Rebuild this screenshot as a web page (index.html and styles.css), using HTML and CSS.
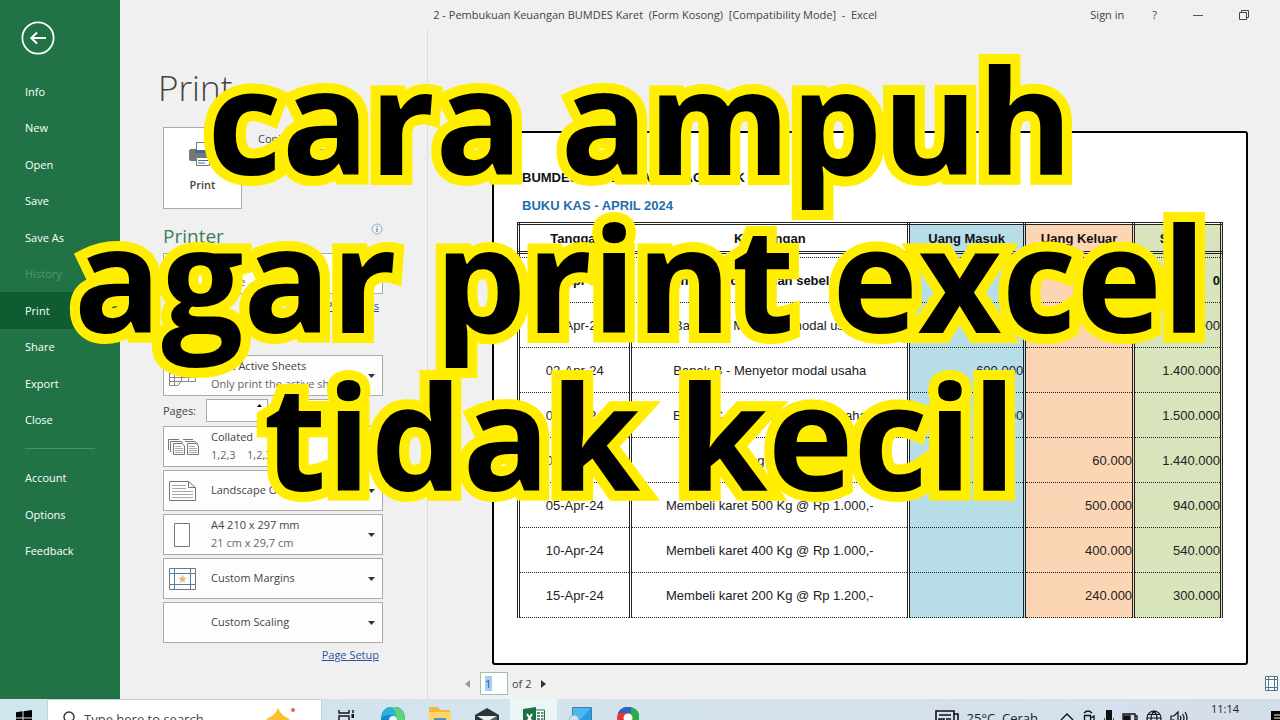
FILE: index.html
```html
<!DOCTYPE html>
<html lang="id">
<head>
  <meta charset="UTF-8">
  <meta name="viewport" content="width=device-width, initial-scale=1.0">
  <title>cara ampuh agar print excel tidak kecil</title>
  <link rel="stylesheet" href="styles.css">
</head>
<body>

  <div class="backstage">
    <!-- Menu File -->
    <nav class="sidebar">
      <button class="back" aria-label="Back">
        <svg width="34" height="34" viewBox="0 0 34 34" fill="none" stroke="#fff">
          <circle cx="17" cy="17" r="15.6" stroke-width="1.8"/>
          <path d="M25 17H10M16 11.5L10.300 17L16 22.500" stroke-width="2"/>
        </svg>
      </button>
      <ul class="menu menu-main">
        <li><a href="#">Info</a></li>
        <li><a href="#">New</a></li>
        <li><a href="#">Open</a></li>
        <li><a href="#">Save</a></li>
        <li><a href="#">Save As</a></li>
        <li class="disabled"><a>History</a></li>
        <li class="active"><a href="#">Print</a></li>
        <li><a href="#">Share</a></li>
        <li><a href="#">Export</a></li>
        <li><a href="#">Close</a></li>
      </ul>
      <hr class="menu-line">
      <ul class="menu menu-more">
        <li><a href="#">Account</a></li>
        <li><a href="#">Options</a></li>
        <li><a href="#">Feedback</a></li>
      </ul>
    </nav>

    <div class="main">
      <header class="titlebar">
        <span class="doc-title">2 - Pembukuan Keuangan BUMDES Karet  (Form Kosong)  [Compatibility Mode]  -  Excel</span>
        <div class="window-tools">
          <button>Sign in</button>
          <button aria-label="Help">?</button>
          <button aria-label="Minimize">
            <svg width="10" height="10" viewBox="0 0 10 10" stroke="#555"><path d="M0 5.500H10"/></svg>
          </button>
          <button aria-label="Restore">
            <svg width="10" height="10" viewBox="0 0 10 10" fill="none" stroke="#444"><path d="M.5 2.500H7.500V9.500H.5ZM2.500 2.500V.5H9.500V7.500H7.500"/></svg>
          </button>
        </div>
      </header>

      <div class="content">
        <!-- Pengaturan cetak -->
        <section class="settings">
          <h1>Print</h1>
          <div class="print-row">
            <button class="print-button">
              <svg width="28" height="26" viewBox="0 0 28 26">
                <rect x="0" y="8" width="28" height="12" rx="2" fill="#777"/>
                <path d="M7.500 1.500H20.500V12H7.500Z" fill="#fff" stroke="#777"/>
                <path d="M6 9H22V12H6Z" fill="#3b6ea8"/>
                <path d="M7.500 16.500H20.500V24.500H7.500Z" fill="#fff" stroke="#777"/>
                <path d="M9 19.500H19M9 22H16" stroke="#3b6ea8"/>
              </svg>
              Print
            </button>
            <label for="copies">Copies:</label>
            <input type="text" id="copies" value="1">
          </div>

          <div class="section-head">
            <h2>Printer</h2>
            <svg width="12" height="12" viewBox="0 0 12 12" fill="none"><circle cx="6" cy="6" r="5" stroke="#8fb0cc"/><path d="M6 3V4M6 5V9" stroke="#2f6ea5"/></svg>
          </div>
          <div class="picker">
            <svg class="picker-icon" width="28" height="22" viewBox="0 0 28 22"><path d="M6.500 1.500H21.500V8H6.500Z" fill="#fff" stroke="#777"/><rect x="2" y="8" width="24" height="9" fill="#777"/></svg>
            <div class="picker-text">
              <select aria-label="Printer"><option>Canon G2010</option></select>
              <small>Offline</small>
            </div>
            <svg class="arrow" width="7" height="4" viewBox="0 0 7 4"><path d="M0 0H7L3.500 4Z"/></svg>
          </div>
          <a class="link" href="#">Printer Properties</a>

          <h2 class="settings-head">Settings</h2>
          <div class="picker">
            <svg class="picker-icon" width="28" height="22" viewBox="0 0 28 22" fill="none" stroke="#888"><path d="M1.500 4.500H27.500V16.500H13L10 20.500H1.500ZM1.500 8.500H27.500M1.500 12.500H27.500M1.500 16.500H13M6.500 4.500V20.500M13.500 4.500V16.500M20.500 4.500V16.500"/></svg>
            <div class="picker-text">
              <select aria-label="Print what"><option>Print Active Sheets</option></select>
              <small>Only print the active sheets</small>
            </div>
            <svg class="arrow" width="7" height="4" viewBox="0 0 7 4"><path d="M0 0H7L3.500 4Z"/></svg>
          </div>
          <div class="pages-row">
            <label for="pageFrom">Pages:</label>
            <div class="spin">
              <input type="text" id="pageFrom">
              <svg width="5" height="3" viewBox="0 0 5 3"><path d="M0 3H5L2.500 0Z"/></svg>
            </div>
            <label for="pageTo">to</label>
            <div class="spin">
              <input type="text" id="pageTo">
              <svg width="5" height="3" viewBox="0 0 5 3"><path d="M0 3H5L2.500 0Z"/></svg>
            </div>
          </div>
          <div class="picker-list">
            <div class="picker">
              <svg class="picker-icon wide" width="32" height="18" viewBox="0 0 32 18" fill="none" stroke="#777">
                <path d="M.5 12V1.500H11M2.500 14V3.500H13L15 5M15 1.500H25M17 3.500H27L30 6"/>
                <path d="M5.500 5.500H14L16.500 8V16.500H5.500ZM19.500 5.500H28L30.500 8V16.500H19.500Z" fill="#fff"/>
                <path d="M7 8.500H13M7 10.500H15M7 12.500H15M7 14.500H15M21 8.500H27M21 10.500H29M21 12.500H29M21 14.500H29" stroke="#aaa"/>
              </svg>
              <div class="picker-text">
                <select aria-label="Collation"><option>Collated</option></select>
                <small>1,2,3    1,2,3    1,2,3</small>
              </div>
              <svg class="arrow" width="7" height="4" viewBox="0 0 7 4"><path d="M0 0H7L3.500 4Z"/></svg>
            </div>
            <div class="picker">
              <svg class="picker-icon" width="28" height="22" viewBox="0 0 28 22" fill="#fff" stroke="#777"><path d="M1.500 1.500H20.500L27.500 7.500V20.500H1.500ZM20.500 1.500V7.500H27.500"/><path d="M4 5.500H18M4 8.500H18M4 11.500H25M4 14.500H25M4 17.500H25" stroke="#aaa"/></svg>
              <div class="picker-text">
                <select aria-label="Orientation"><option>Landscape Orientation</option></select>
              </div>
              <svg class="arrow" width="7" height="4" viewBox="0 0 7 4"><path d="M0 0H7L3.500 4Z"/></svg>
            </div>
            <div class="picker">
              <svg class="picker-icon" width="28" height="24" viewBox="0 0 28 24" fill="#fff" stroke="#777"><path d="M6.500 .5H21.500V23.500H6.500Z"/></svg>
              <div class="picker-text">
                <select aria-label="Paper size"><option>A4 210 x 297 mm</option></select>
                <small>21 cm x 29,7 cm</small>
              </div>
              <svg class="arrow" width="7" height="4" viewBox="0 0 7 4"><path d="M0 0H7L3.500 4Z"/></svg>
            </div>
            <div class="picker">
              <svg class="picker-icon" width="28" height="22" viewBox="0 0 28 22" fill="none" stroke="#777">
                <path d="M1.500 .5H27.500V21.500H1.500Z"/>
                <path d="M6.500 .5V21.500M22.500 .5V21.500M1.500 5.500H27.500M1.500 16.500H27.500" stroke="#4f7fae"/>
                <path d="M14.500 6.500L15.700 9.700H19L16.300 11.700L17.300 15L14.500 13L11.700 15L12.700 11.700L10 9.700H13.300Z" fill="#ecb877" stroke="none"/>
              </svg>
              <div class="picker-text">
                <select aria-label="Margins"><option>Custom Margins</option></select>
              </div>
              <svg class="arrow" width="7" height="4" viewBox="0 0 7 4"><path d="M0 0H7L3.500 4Z"/></svg>
            </div>
            <div class="picker">
              <span class="picker-icon"></span>
              <div class="picker-text">
                <select aria-label="Scaling"><option>Custom Scaling</option></select>
              </div>
              <svg class="arrow" width="7" height="4" viewBox="0 0 7 4"><path d="M0 0H7L3.500 4Z"/></svg>
            </div>
          </div>
          <a class="link page-setup" href="#">Page Setup</a>
        </section>

        <!-- Pratinjau halaman -->
        <section class="preview">
          <div class="paper">
            <p class="org">BUMDES SUMBER AMAN AGUNG K</p>
            <p class="book">BUKU KAS - APRIL 2024</p>
            <table class="cash">
              <colgroup>
                <col class="c-date"><col class="c-note"><col class="c-in"><col class="c-out"><col class="c-total">
              </colgroup>
              <thead>
                <tr><th>Tanggal</th><th>Keterangan</th><th>Uang Masuk</th><th>Uang Keluar</th><th>Saldo</th></tr>
              </thead>
              <tbody>
                <tr class="thin"><td></td><td></td><td></td><td></td><td></td></tr>
                <tr class="opening"><td>01-Apr-24</td><td>Pindahan dari bulan sebelumnya</td><td></td><td></td><td>0</td></tr>
                <tr><td>01-Apr-24</td><td>Bapak A - Menyetor modal usaha</td><td>800.000</td><td></td><td>800.000</td></tr>
                <tr><td>02-Apr-24</td><td>Bapak B - Menyetor modal usaha</td><td>600.000</td><td></td><td>1.400.000</td></tr>
                <tr><td>03-Apr-24</td><td>Bapak C - Menyetor modal usaha</td><td>100.000</td><td></td><td>1.500.000</td></tr>
                <tr><td>04-Apr-24</td><td>Uang bensin</td><td></td><td>60.000</td><td>1.440.000</td></tr>
                <tr><td>05-Apr-24</td><td>Membeli karet 500 Kg @ Rp 1.000,-</td><td></td><td>500.000</td><td>940.000</td></tr>
                <tr><td>10-Apr-24</td><td>Membeli karet 400 Kg @ Rp 1.000,-</td><td></td><td>400.000</td><td>540.000</td></tr>
                <tr><td>15-Apr-24</td><td>Membeli karet 200 Kg @ Rp 1.200,-</td><td></td><td>240.000</td><td>300.000</td></tr>
              </tbody>
            </table>
          </div>
          <div class="pager">
            <button aria-label="Previous page"><svg width="5" height="8" viewBox="0 0 5 8" fill="#999"><path d="M5 0V8L0 4Z"/></svg></button>
            <div class="page-box"><input type="text" id="page" value="1" aria-label="Current page"></div>
            <label for="page">of 2</label>
            <button aria-label="Next page"><svg width="5" height="8" viewBox="0 0 5 8" fill="#333"><path d="M0 0V8L5 4Z"/></svg></button>
            <button class="show-margins" aria-label="Show Margins"><svg width="13" height="15" viewBox="0 0 13 15" fill="#fff" stroke="#4f7690"><path d="M.5 .5H12.500V14.500H.5ZM3.500 .5V14.500M9.500 .5V14.500M.5 3.500H12.500M.5 11.500H12.500"/></svg></button>
          </div>
        </section>
      </div>
    </div>
  </div>

  <footer class="taskbar">
    <button class="start" aria-label="Start">
      <svg width="16" height="16" viewBox="0 0 16 16"><path d="M0 2.300L6.500 1.300V7.500H0ZM7.500 1.200L16 0V7.500H7.500ZM0 8.500H6.500V14.700L0 13.700ZM7.500 8.500H16V16L7.500 14.800Z"/></svg>
    </button>
    <div class="search">
      <svg width="14" height="18" viewBox="0 0 14 18" fill="none" stroke="#333" stroke-width="1.400"><circle cx="8" cy="6" r="5"/><path d="M5 10L1 16"/></svg>
      <input type="text" placeholder="Type here to search" aria-label="Search">
      <svg width="42" height="30" viewBox="0 0 42 30"><path d="M12 0Q15 8 24 11Q16 15 12 25Q8 15 0 11Q9 8 12 0Z" fill="#fbc02d"/><path d="M33 10Q34 16 40 18Q34 20 33 26Q31 20 26 18Q32 16 33 10Z" fill="#fdd663"/><circle cx="27" cy="2" r="2" fill="#e8663c"/></svg>
    </div>
    <div class="apps">
      <button aria-label="Task View">
        <svg width="16" height="18" viewBox="0 0 16 18" fill="none" stroke="#111" stroke-width="1.400"><path d="M1 0V3H11V0M1 6H11V14H1ZM15 0V3M15 10V17"/><path d="M13.500 4H16.500V8H13.500Z" fill="#111" stroke="none"/></svg>
      </button>
      <button aria-label="Edge">
        <svg width="24" height="24" viewBox="0 0 24 24"><circle cx="12" cy="12" r="12" fill="#1681d0"/><path d="M0 11A12 12 0 0 1 24 11C24 17 16 18 15 14C16 9 8 5 0 11Z" fill="#2bb3cf"/><path d="M10 0A12 12 0 0 1 24 11C24 16 17 17 15 14C17 8 14 3 10 0Z" fill="#5fd477"/><circle cx="12" cy="13" r="4" fill="#e6f6fa"/></svg>
      </button>
      <button aria-label="File Explorer">
        <svg width="22" height="20" viewBox="0 0 22 20"><path d="M0 0H9L11 3H21V20H0Z" fill="#f4b63c"/><path d="M0 5H22V20H0Z" fill="#fdd667"/><path d="M5 11H17V20H5Z" fill="#4a91c4"/></svg>
      </button>
      <button aria-label="Mail">
        <svg width="24" height="24" viewBox="0 0 24 24"><path d="M0 8L12 1L24 8V24H0Z" fill="#2d353c"/><path d="M2 9H22L12 15Z" fill="#e9f1f5"/><path d="M12 15L22 9V18Z" fill="#55616a"/></svg>
      </button>
      <button class="open" aria-label="Excel">
        <svg width="22" height="22" viewBox="0 0 22 22"><path d="M10 3H21.500V20H10Z" fill="#fff" stroke="#1f7244"/><path d="M14 6H17M14 9H17M14 12H17M18 6H20.500M18 9H20.500M18 12H20.500" stroke="#1f7244" stroke-width="1.600"/><path d="M0 2L13 0V22L0 20Z" fill="#1f7244"/><path d="M4 7L9 15M9 7L4 15" stroke="#fff" stroke-width="2"/></svg>
      </button>
      <button aria-label="Remote Desktop">
        <svg width="24" height="22" viewBox="0 0 24 22"><path d="M3.500 .5H22.500V16H3.500Z" fill="#4db8ef" stroke="#3a7cab"/><path d="M8 16L22 1V16Z" fill="#2a9be0"/><circle cx="5" cy="13" r="5" fill="#cfe3ef" stroke="#8aa9bd"/></svg>
      </button>
      <button aria-label="Recorder">
        <svg width="22" height="22" viewBox="0 0 22 22"><circle cx="11" cy="11" r="11" fill="#e4392e"/><path d="M1 6A11 11 0 0 1 14 0L15 6H8Z" fill="#2f62c9"/><path d="M14 0A11 11 0 0 1 20 18L14 13Z" fill="#2bab4a"/><circle cx="11" cy="11" r="4.500" fill="#fff"/></svg>
      </button>
    </div>
    <div class="weather">
      <svg width="24" height="18" viewBox="0 0 24 18" fill="none" stroke="#111" stroke-width="1.600"><path d="M1 1H19V17H1ZM19 4H23V17H19M4 5H16M4 9H9V13H4ZM11 9H16M11 12H16"/></svg>
      <span>25°C  Cerah</span>
    </div>
    <div class="tray">
      <svg width="14" height="16" viewBox="0 0 14 16" fill="none" stroke="#111" stroke-width="1.400"><path d="M1 10L7 4L13 10"/></svg>
      <svg width="14" height="16" viewBox="0 0 14 16" fill="none" stroke="#111" stroke-width="1.300"><path d="M2 3Q6 -1 10 3M2.500 5.500H8.500V14H2.500ZM8.500 8L12 6V13L8.500 11"/></svg>
      <svg width="10" height="18" viewBox="0 0 10 18"><rect x="2" y="0" width="6" height="11" fill="#111"/><path d="M0 8V13H10V8" fill="none" stroke="#111" stroke-width="1.400"/></svg>
      <svg width="16" height="14" viewBox="0 0 16 14" fill="none" stroke="#111" stroke-width="1.300"><path d="M1 4H13V12H1ZM13 6H15V10H13"/><path d="M2 6H8V11H2Z" fill="#111"/></svg>
      <svg width="16" height="16" viewBox="0 0 16 16" fill="none" stroke="#111" stroke-width="1.200"><circle cx="8" cy="8" r="7"/><path d="M1 8H15M2 4.500H14M8 1C4 5 4 11 8 15M8 1C12 5 12 11 8 15"/></svg>
      <svg width="18" height="16" viewBox="0 0 18 16" fill="none" stroke="#111" stroke-width="1.200"><path d="M1 6H4L8 2V14L4 10H1ZM10 6Q12 8 10 10M12.500 4Q15.500 8 12.500 12M15 2Q19 8 15 14"/></svg>
    </div>
    <time class="clock">11:14</time>
    <button class="notes" aria-label="Notifications">
      <svg width="18" height="18" viewBox="0 0 18 18"><path d="M0 0H18V14H10L6 18V14H0Z"/><path d="M3 4H15M3 7H15M3 10H15" stroke="#fff"/></svg>
    </button>
  </footer>

  <p class="headline">cara ampuh<br>agar print excel<br>tidak kecil</p>

</body>
</html>
```

FILE: styles.css
```css
* { box-sizing: border-box; }
body {
  margin: 0; height: 100vh; overflow: hidden; position: relative;
  font-family: "Open Sans", "Noto Sans", sans-serif; font-size: 11px; line-height: 16px;
  color: #444; background: #f0f0f0;
}
h1, h2, p, ul { margin: 0; padding: 0; }
button, input, select { font: inherit; color: inherit; }
button {
  display: flex; align-items: center; justify-content: center;
  padding: 0; border: none; background: none;
}
svg { display: block; flex-shrink: 0; }

.backstage { display: flex; height: calc(100vh - 21px); }

/* Menu kiri */
.sidebar { width: 120px; flex-shrink: 0; padding-top: 21px; background: #217346; color: #fff; }
.back { margin-left: 21px; }
.menu { list-style: none; display: flex; flex-direction: column; }
.menu li { flex: 1; display: flex; align-items: center; padding: 1px 0 0 25px; }
.menu a { color: inherit; text-decoration: none; }
.menu-main { height: 365px; margin-top: 18px; }
.menu-more { height: 110px; }
.menu .active { background: #0e5c2f; }
.menu .disabled { color: #4f9670; }
.menu-line { margin: 10px 25px; border: none; border-top: 1px solid #439467; }

.main { flex: 1; min-width: 0; display: flex; flex-direction: column; }
.titlebar { display: flex; align-items: center; height: 30px; padding-right: 31px; }
.doc-title { flex: 1; padding-left: 100px; text-align: center; white-space: pre; }
.window-tools { display: flex; justify-content: flex-end; gap: 28px; }
.window-tools button:nth-child(n+3) { margin-left: 8px; }
.content { flex: 1; display: flex; min-height: 0; }

/* Kolom pengaturan */
.settings { width: 308px; flex-shrink: 0; padding: 32px 44px 0 43px; border-right: 1px solid #dcdcdc; }
.settings h1 { margin-left: -5px; font-size: 35px; line-height: 52px; font-weight: 300; }
.settings h2 { font-size: 19px; line-height: 24px; font-weight: 400; color: #3b7f5b; }
.print-row { display: flex; align-items: flex-start; margin-top: 13px; }
.print-button {
  flex-direction: column; gap: 10px; width: 79px; height: 82px; padding-bottom: 2px;
  border: 1px solid #ababab; background: #fff; font-weight: 600;
}
.print-row label { margin: 4px 14px 0 16px; }
.print-row input { width: 56px; height: 23px; padding: 0 4px; border: 1px solid #ababab; background: #fff; }
.section-head { display: flex; align-items: flex-start; justify-content: space-between; height: 32px; margin-top: 12px; }
.section-head svg { margin-top: 2px; }
.section-head h2 { margin-top: 3px; }
.picker {
  display: flex; align-items: center; height: 41px; padding: 0 7px 0 4px;
  border: 1px solid #ababab; background: #fdfdfd;
}
.picker-icon { width: 28px; margin-right: 15px; }
.picker-icon.wide { width: 32px; margin-right: 11px; }
.picker-text { flex: 1; min-width: 0; padding-bottom: 2px; }
.picker select {
  display: block; width: 100%; height: 19px; padding: 0; border: none;
  appearance: none; background: none; font-weight: 500;
}
.picker small { display: block; font-size: 11px; line-height: 18px; white-space: pre; overflow: hidden; color: #666; }
.arrow { fill: #333; }
.link { display: block; margin: 4px 4px 0 0; text-align: right; color: #2b579a; }
.settings-head { margin: 13px 0 4px; }
.pages-row { display: flex; align-items: center; gap: 10px; height: 23px; margin: 3px 0 4px; }
.spin { display: flex; align-items: flex-start; width: 62px; height: 23px; padding: 4px 5px; border: 1px solid #ababab; background: #fff; }
.spin input { flex: 1; min-width: 0; padding: 0; border: none; height: 14px; background: none; }
.picker-list { display: flex; flex-direction: column; gap: 3px; }

/* Pratinjau */
.preview { flex: 1; min-width: 0; display: flex; flex-direction: column; padding-top: 101px; }
.paper {
  height: 534px; margin: 0 32px 0 64px; padding: 33px 23px 0; background: #fff;
  border: 2px solid #000; border-radius: 3px;
  font-family: "Liberation Sans Narrow", "Liberation Sans", sans-serif; font-size: 13px; line-height: 24px; color: #222;
}
.org, .book { padding-left: 5px; font-weight: bold; color: #111; white-space: pre; }
.book { margin: 4px 0; color: #1f6fae; }
.cash { width: 100%; table-layout: fixed; border-collapse: collapse; }
.cash th, .cash td { padding: 2px 0 0; border: 3px double #222; text-align: center; }
.cash th { height: 29px; color: #111; }
.cash td { height: 45px; border-top: 1px dotted #222; border-bottom: 1px dotted #222; }
.cash .thin td { height: 5px; }
.cash td:nth-child(n+3) { text-align: right; }
.cash th:nth-child(3), .cash td:nth-child(3) { background: #b7dde8; }
.cash th:nth-child(4), .cash td:nth-child(4) { background: #fcd5b4; }
.cash th:nth-child(5), .cash td:nth-child(5) { background: #d8e4bc; }
.cash .opening { font-weight: bold; color: #111; }
.cash tbody tr:first-child td { border-top: 3px double #222; }
.c-date { width: 16%; }
.c-note { width: 39.5%; }
.c-in { width: 16.5%; }
.c-out { width: 15.5%; }
.c-total { width: 12.5%; }
.pager { display: flex; align-items: center; height: 23px; margin-top: 7px; padding: 0 2px 0 37px; }
.page-box { display: flex; align-items: center; width: 28px; height: 23px; margin: 0 4px 0 10px; padding-left: 4px; border: 1px solid #9dbfae; background: #fff; }
.page-box input { width: 7px; height: 15px; padding: 0; border: none; background: #a9cbee; color: #2b579a; }
.pager label { margin-right: 10px; }
.pager .show-margins { margin-left: auto; }

/* Taskbar, bagian bawahnya terpotong jendela */
.taskbar {
  display: flex; align-items: flex-start; height: 40px; color: #222;
  background: linear-gradient(90deg, #cfe6ee, #d3e3ec 50%, #d4deeb);
}
.start { width: 47px; padding-top: 11px; }
.search { display: flex; align-items: flex-start; width: 275px; height: 40px; padding: 8px 13px; gap: 9px; border: 1px solid #c5d3d9; background: #fff; }
.search svg:first-child { margin-top: 3px; }
.search input { flex: 1; min-width: 0; height: 22px; padding: 0; border: none; font-size: 13px; line-height: 22px; }
.search input::placeholder { color: #444; opacity: 1; }
.apps { display: flex; flex: 1; }
.apps button { width: 47px; height: 40px; padding-top: 8px; align-items: flex-start; }
.apps button:first-child { padding-top: 11px; }
.apps .open { background: #edf5f8; }
.weather { display: flex; gap: 8px; padding-top: 11px; font-size: 13px; white-space: pre; }
.tray { display: flex; gap: 8px; padding: 11px 23px 0 22px; }
.clock { padding-top: 2px; font-size: 11px; }
.notes { width: 50px; margin-right: -9px; padding: 12px 0 0 32px; }

/* Judul besar di atas layar */
.headline {
  position: absolute; top: 40px; left: 0; right: 0;
  font-size: 145px; line-height: 158px; font-weight: 700; text-align: center; white-space: nowrap;
  color: #000; -webkit-text-stroke: 20px #ffee00; paint-order: stroke fill; pointer-events: none;
}
```
